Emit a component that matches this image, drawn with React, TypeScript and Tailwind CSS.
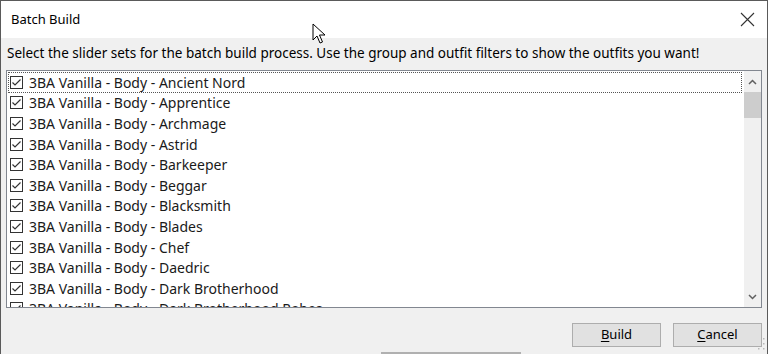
import React from "react";

const items = [
  "Ancient Nord",
  "Apprentice",
  "Archmage",
  "Astrid",
  "Barkeeper",
  "Beggar",
  "Blacksmith",
  "Blades",
  "Chef",
  "Daedric",
  "Dark Brotherhood",
  "Dark Brotherhood Robes",
];

function Check() {
  return (
    <span className="w-[13px] h-[13px] border border-[#333333] bg-white flex items-center justify-center shrink-0">
      <svg width="11" height="11" viewBox="0 0 11 11">
        <path d="M1.5 5.5 L4 8 L9.5 2.5" fill="none" stroke="#333333" strokeWidth="1.2" />
      </svg>
    </span>
  );
}

export default function App() {
  return (
    <div
      className="w-[768px] h-[354px] relative overflow-hidden bg-[#f0f0f0] flex flex-col border-l border-t border-r border-[#5a5a5a]"
      style={{ fontFamily: '"Noto Sans", "Open Sans", sans-serif' }}
    >
      {/* Title bar */}
      <div className="h-[37px] bg-white flex items-center justify-between shrink-0">
        <span className="pl-[10px] text-[13px] text-black">Batch Build</span>
        <svg width="15" height="15" viewBox="0 0 15 15" className="mr-[12px]">
          <path d="M1 1 L14 14 M14 1 L1 14" stroke="#333" strokeWidth="1.1" />
        </svg>
      </div>
      {/* Description */}
      <div className="pl-[6px] pt-[5px] h-[32px] text-[13.5px] text-black leading-[20px] whitespace-nowrap">
        Select the slider sets for the batch build process. Use the group and outfit filters to show the outfits you want!
      </div>
      {/* List */}
      <div className="ml-[5px] w-[756px] h-[238px] border border-[#828790] bg-white flex">
        <div className="flex-1 overflow-hidden pl-[1px] pt-[1px] pr-[2px]">
          {items.map((it, i) => (
            <div
              key={it}
              className={`h-[20.6px] flex items-center gap-[6px] pl-[1px] text-[14px] text-[#1a1a1a] whitespace-nowrap ${
                i === 0 ? "border border-dotted border-[#555]" : "border border-transparent"
              }`}
            >
              <Check />
              <span>3BA Vanilla - Body - {it}</span>
            </div>
          ))}
        </div>
        <div className="w-[17px] bg-[#f0f0f0] flex flex-col items-center">
          <div className="h-[21px] flex items-center justify-center">
            <svg width="9" height="6" viewBox="0 0 9 6">
              <path d="M1 5 L4.5 1.5 L8 5" fill="none" stroke="#606060" strokeWidth="1.5" />
            </svg>
          </div>
          <div className="w-[17px] h-[26px] bg-[#cdcdcd]" />
          <div className="flex-1" />
          <div className="h-[21px] flex items-center justify-center">
            <svg width="9" height="6" viewBox="0 0 9 6">
              <path d="M1 1 L4.5 4.5 L8 1" fill="none" stroke="#606060" strokeWidth="1.5" />
            </svg>
          </div>
        </div>
      </div>
      {/* Buttons */}
      <div className="flex justify-end gap-[12px] pr-[5px] pt-[15px]">
        <button className="w-[89px] h-[24px] bg-[#e1e1e1] border border-[#adadad] text-[13px] text-black">
          <span className="underline underline-offset-2">B</span>uild
        </button>
        <button className="w-[89px] h-[24px] bg-[#e1e1e1] border border-[#adadad] text-[13px] text-black">
          <span className="underline underline-offset-2">C</span>ancel
        </button>
      </div>
      {/* resize grip */}
      <svg width="8" height="14" viewBox="0 0 8 14" className="absolute right-[1px] bottom-[2px]">
        <rect x="5" y="0" width="1.5" height="1.5" fill="#b8b8b8" />
        <rect x="5" y="5" width="1.5" height="1.5" fill="#b8b8b8" />
        <rect x="0" y="10" width="1.5" height="1.5" fill="#b8b8b8" />
        <rect x="5" y="10" width="1.5" height="1.5" fill="#b8b8b8" />
      </svg>
      <div className="absolute left-[380px] bottom-0 w-[140px] h-[2px] bg-[#b0b0b0]" />
      {/* Mouse cursor */}
      <svg width="14" height="22" viewBox="0 0 14 22" className="absolute left-[311px] top-[22px]">
        <path d="M1 1 L1 17 L5 13 L8 20 L10.5 19 L7.5 12 L13 12 Z" fill="#fff" stroke="#000" strokeWidth="1" strokeLinejoin="round" />
      </svg>
    </div>
  );
}
